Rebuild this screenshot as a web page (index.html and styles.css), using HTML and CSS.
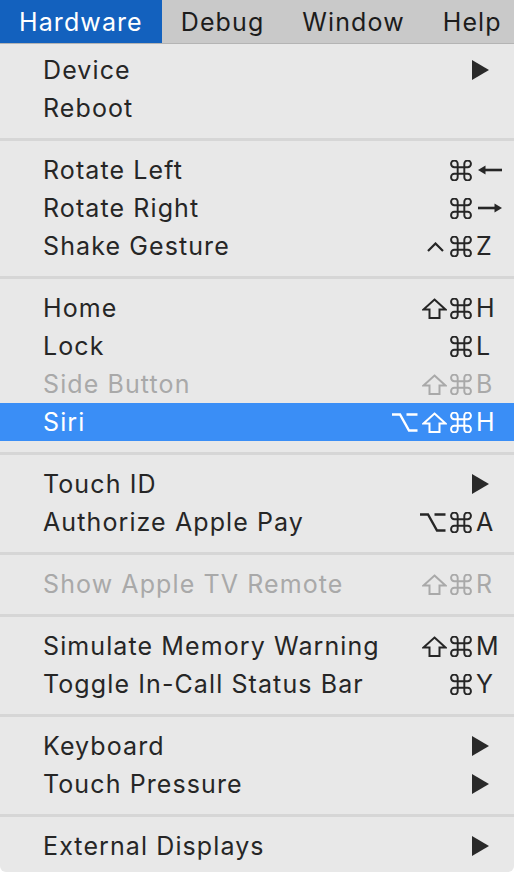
FILE: index.html
```html
<!DOCTYPE html>
<html>
<head>
<meta charset="utf-8">
<link rel="stylesheet" href="styles.css">
</head>
<body>
<div class="screen">
  <div class="menubar">
    <div class="mb-item active">Hardware</div>
    <div class="mb-item">Debug</div>
    <div class="mb-item">Window</div>
    <div class="mb-item">Help</div>
  </div>
  <div class="menu">
    <div class="row"><span class="label">Device</span><span class="sub"></span></div>
    <div class="row"><span class="label">Reboot</span></div>
    <div class="sep"></div>
    <div class="row"><span class="label">Rotate Left</span>
      <span class="mods"><svg class="i-cmd" viewBox="2.5 2.5 19 19"><path d="M15 6v12a3 3 0 1 0 3-3H6a3 3 0 1 0 3 3V6a3 3 0 1 0-3 3h12a3 3 0 1 0-3-3"/></svg></span>
      <span class="key"><svg class="i-arrow" viewBox="0 0 24 10"><path class="fill" d="M0 5 L7.5 0.5 L7.5 9.5 Z"/><path d="M6 5 H24"/></svg></span></div>
    <div class="row"><span class="label">Rotate Right</span>
      <span class="mods"><svg class="i-cmd" viewBox="2.5 2.5 19 19"><path d="M15 6v12a3 3 0 1 0 3-3H6a3 3 0 1 0 3 3V6a3 3 0 1 0-3 3h12a3 3 0 1 0-3-3"/></svg></span>
      <span class="key"><svg class="i-arrow" viewBox="0 0 24 10"><path class="fill" d="M24 5 L16.5 0.5 L16.5 9.5 Z"/><path d="M0 5 H18"/></svg></span></div>
    <div class="row"><span class="label">Shake Gesture</span>
      <span class="mods"><svg class="i-ctrl" viewBox="0 0 17 10"><path d="M1 9 L8.5 1.5 L16 9"/></svg><svg class="i-cmd" viewBox="2.5 2.5 19 19"><path d="M15 6v12a3 3 0 1 0 3-3H6a3 3 0 1 0 3 3V6a3 3 0 1 0-3 3h12a3 3 0 1 0-3-3"/></svg></span>
      <span class="key">Z</span></div>
    <div class="sep"></div>
    <div class="row"><span class="label">Home</span>
      <span class="mods"><svg class="i-shift" viewBox="0 0 25 21"><path d="M12.5 1.5 L23.5 11.5 H17.5 V20 H7.5 V11.5 H1.5 Z"/></svg><svg class="i-cmd" viewBox="2.5 2.5 19 19"><path d="M15 6v12a3 3 0 1 0 3-3H6a3 3 0 1 0 3 3V6a3 3 0 1 0-3 3h12a3 3 0 1 0-3-3"/></svg></span>
      <span class="key">H</span></div>
    <div class="row"><span class="label">Lock</span>
      <span class="mods"><svg class="i-cmd" viewBox="2.5 2.5 19 19"><path d="M15 6v12a3 3 0 1 0 3-3H6a3 3 0 1 0 3 3V6a3 3 0 1 0-3 3h12a3 3 0 1 0-3-3"/></svg></span>
      <span class="key">L</span></div>
    <div class="row disabled"><span class="label">Side Button</span>
      <span class="mods"><svg class="i-shift" viewBox="0 0 25 21"><path d="M12.5 1.5 L23.5 11.5 H17.5 V20 H7.5 V11.5 H1.5 Z"/></svg><svg class="i-cmd" viewBox="2.5 2.5 19 19"><path d="M15 6v12a3 3 0 1 0 3-3H6a3 3 0 1 0 3 3V6a3 3 0 1 0-3 3h12a3 3 0 1 0-3-3"/></svg></span>
      <span class="key">B</span></div>
    <div class="row selected"><span class="label">Siri</span>
      <span class="mods"><svg class="i-opt" viewBox="0 0 27 21"><path d="M1 2.5 H9 L18 18.5 H26.5 M15.5 2.5 H26.5"/></svg><svg class="i-shift" viewBox="0 0 25 21"><path d="M12.5 1.5 L23.5 11.5 H17.5 V20 H7.5 V11.5 H1.5 Z"/></svg><svg class="i-cmd" viewBox="2.5 2.5 19 19"><path d="M15 6v12a3 3 0 1 0 3-3H6a3 3 0 1 0 3 3V6a3 3 0 1 0-3 3h12a3 3 0 1 0-3-3"/></svg></span>
      <span class="key">H</span></div>
    <div class="sep"></div>
    <div class="row"><span class="label">Touch ID</span><span class="sub"></span></div>
    <div class="row"><span class="label">Authorize Apple Pay</span>
      <span class="mods"><svg class="i-opt" viewBox="0 0 27 21"><path d="M1 2.5 H9 L18 18.5 H26.5 M15.5 2.5 H26.5"/></svg><svg class="i-cmd" viewBox="2.5 2.5 19 19"><path d="M15 6v12a3 3 0 1 0 3-3H6a3 3 0 1 0 3 3V6a3 3 0 1 0-3 3h12a3 3 0 1 0-3-3"/></svg></span>
      <span class="key">A</span></div>
    <div class="sep"></div>
    <div class="row disabled"><span class="label">Show Apple TV Remote</span>
      <span class="mods"><svg class="i-shift" viewBox="0 0 25 21"><path d="M12.5 1.5 L23.5 11.5 H17.5 V20 H7.5 V11.5 H1.5 Z"/></svg><svg class="i-cmd" viewBox="2.5 2.5 19 19"><path d="M15 6v12a3 3 0 1 0 3-3H6a3 3 0 1 0 3 3V6a3 3 0 1 0-3 3h12a3 3 0 1 0-3-3"/></svg></span>
      <span class="key">R</span></div>
    <div class="sep"></div>
    <div class="row"><span class="label">Simulate Memory Warning</span>
      <span class="mods"><svg class="i-shift" viewBox="0 0 25 21"><path d="M12.5 1.5 L23.5 11.5 H17.5 V20 H7.5 V11.5 H1.5 Z"/></svg><svg class="i-cmd" viewBox="2.5 2.5 19 19"><path d="M15 6v12a3 3 0 1 0 3-3H6a3 3 0 1 0 3 3V6a3 3 0 1 0-3 3h12a3 3 0 1 0-3-3"/></svg></span>
      <span class="key">M</span></div>
    <div class="row"><span class="label">Toggle In-Call Status Bar</span>
      <span class="mods"><svg class="i-cmd" viewBox="2.5 2.5 19 19"><path d="M15 6v12a3 3 0 1 0 3-3H6a3 3 0 1 0 3 3V6a3 3 0 1 0-3 3h12a3 3 0 1 0-3-3"/></svg></span>
      <span class="key">Y</span></div>
    <div class="sep"></div>
    <div class="row"><span class="label">Keyboard</span><span class="sub"></span></div>
    <div class="row"><span class="label">Touch Pressure</span><span class="sub"></span></div>
    <div class="sep"></div>
    <div class="row"><span class="label">External Displays</span><span class="sub"></span></div>
  </div>
</div>
</body>
</html>
```
FILE: styles.css
```css
html, body {
  margin: 0;
  padding: 0;
  background: #ffffff;
}
.screen {
  width: 514px;
  height: 874px;
  overflow: hidden;
  font-family: "Inter", "Liberation Sans", sans-serif;
  font-size: 25px;
  letter-spacing: 1.1px;
  color: #262626;
}
.menubar {
  display: flex;
  height: 43px;
  background: #c9c9c9;
  border-bottom: 1px solid #b4b4b4;
  align-items: stretch;
}
.mb-item {
  display: flex;
  align-items: center;
  padding: 0 19px;
  color: #1c1c1c;
}
.mb-item.active {
  background: #1361be;
  color: #ffffff;
  padding: 0 19px;
}
.menu {
  background: #e8e8e8;
  padding: 7px 0;
  border-radius: 0 0 6px 6px;
}
.row {
  display: flex;
  align-items: center;
  height: 38px;
  padding-left: 43px;
}
.label {
  flex: 1;
}
.mods {
  display: flex;
  align-items: center;
  gap: 3px;
  margin-right: 4px;
}
.mods svg, .key svg {
  display: block;
  fill: none;
  stroke: currentColor;
}
.i-cmd {
  width: 22px;
  height: 21px;
  stroke-width: 1.75;
}
.i-shift {
  width: 25px;
  height: 21px;
  stroke-width: 2;
}
.i-opt {
  width: 27px;
  height: 21px;
  stroke-width: 2.4;
  margin-right: 1px;
}
.i-ctrl {
  width: 17px;
  height: 10px;
  stroke-width: 2.2;
  margin-right: 3px;
  align-self: flex-start;
  margin-top: 6px;
}
.i-arrow {
  width: 24px;
  height: 10px;
  stroke-width: 2.6;
  margin-left: 2px;
}
.i-arrow .fill {
  fill: currentColor;
  stroke: none;
}
.key {
  width: 38px;
  display: flex;
  align-items: center;
  letter-spacing: 0;
}
.sub {
  width: 0;
  height: 0;
  border-top: 10px solid transparent;
  border-bottom: 10px solid transparent;
  border-left: 17px solid #2a2a2a;
  margin-right: 25px;
}
.disabled {
  color: #a9a9a9;
}
.selected {
  background: #3a8ef6;
  color: #ffffff;
}
.sep {
  height: 24px;
  display: flex;
  align-items: center;
}
.sep::before {
  content: "";
  flex: 1;
  height: 3px;
  background: #d6d6d6;
}
```
